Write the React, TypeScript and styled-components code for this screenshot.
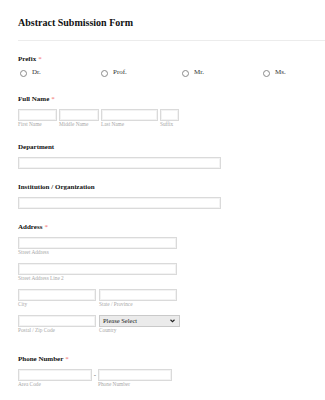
import styled, {createGlobalStyle} from "styled-components";

const GlobalStyle = createGlobalStyle`
  html, body {
    margin: 0;
    padding: 0;
    background: #fff;
  }
  body {
    font-family: "Liberation Serif", "Times New Roman", serif;
    color: #1a1a1a;
  }
`;

const Page = styled.div`
  width: 325px;
  padding-left: 18px;
  box-sizing: border-box;
  overflow: hidden;
`;

const Header = styled.div`
  padding-top: 17px;
  border-bottom: 1px solid #ececec;
  padding-bottom: 11px;
`;

const Title = styled.h1`
  margin: 0;
  font-size: 10px;
  line-height: 12px;
  font-weight: bold;
  color: #111;
`;

const Field = styled.div<{ $top: number }>`
  margin-top: ${p => p.$top}px;
`;

const Label = styled.div`
  font-size: 7px;
  line-height: 9px;
  font-weight: bold;
  color: #111;
  margin-bottom: 5px;

  span {
    color: #f26d6d;
    font-weight: normal;
    margin-left: 2px;
  }
`;

const RadioRow = styled.div`
  display: flex;
  margin-top: -2px;
`;

const RadioOption = styled.label`
  width: 81px;
  flex-shrink: 0;
  display: flex;
  align-items: center;
  font-size: 7px;
  line-height: 9px;
  font-weight: normal;
  color: #333;

  &:last-child {
    width: auto;
  }
`;

const Circle = styled.span`
  width: 7px;
  height: 7px;
  box-sizing: border-box;
  border: 1px solid #8a8a8a;
  border-radius: 50%;
  margin: 3px 5px 0 2px;
`;

const Row = styled.div<{ $gap?: number }>`
  display: flex;
  gap: ${p => p.$gap ?? 3}px;
  align-items: flex-start;
`;

const Part = styled.div<{ $w: number }>`
  width: ${p => p.$w}px;
  flex-shrink: 0;
  display: flex;
  flex-direction: column;
`;

const Input = styled.div<{ $w?: number }>`
  width: ${p => (p.$w ? `${p.$w}px` : "100%")};
  height: 12px;
  box-sizing: border-box;
  border: 1px solid #dadada;
  box-shadow: inset 0 0 0 1px #f3f3f3;
  background: #fff;
`;

const Sub = styled.div`
  font-size: 5.3px;
  line-height: 7px;
  color: #a8a8a8;
  white-space: nowrap;
`;

const Stack = styled.div<{ $gap: number }>`
  display: flex;
  flex-direction: column;
  gap: ${p => p.$gap}px;
`;

const SelectBox = styled.div`
  position: relative;
  width: 81px;
  height: 12px;
  box-sizing: border-box;
  border: 1px solid #c9c9c9;
  background: #ebebeb;
  font-size: 6.5px;
  line-height: 10px;
  padding-left: 3px;
  color: #222;

  svg {
    position: absolute;
    right: 4px;
    top: 3px;
  }
`;

const Dash = styled.div`
  width: 6px;
  font-size: 7px;
  line-height: 12px;
  text-align: center;
  color: #555;
`;

function Req({children}: { children: string }) {
    return <Label>{children}<span>*</span></Label>
}

export default function App() {
    const prefixes = ["Dr.", "Prof.", "Mr.", "Ms."];

    return (
        <Page>
            <GlobalStyle/>
            <Header>
                <Title>Abstract Submission Form</Title>
            </Header>

            <Field $top={14}>
                <Req>Prefix</Req>
                <RadioRow>
                    {prefixes.map(p => (
                        <RadioOption key={p}><Circle/>{p}</RadioOption>
                    ))}
                </RadioRow>
            </Field>

            <Field $top={18}>
                <Req>Full Name</Req>
                <Row $gap={2}>
                    <Part $w={39}><Input/><Sub>First Name</Sub></Part>
                    <Part $w={40}><Input/><Sub>Middle Name</Sub></Part>
                    <Part $w={57}><Input/><Sub>Last Name</Sub></Part>
                    <Part $w={19}><Input/><Sub>Suffix</Sub></Part>
                </Row>
            </Field>

            <Field $top={15}>
                <Label>Department</Label>
                <Input $w={203}/>
            </Field>

            <Field $top={14}>
                <Label>Institution / Organization</Label>
                <Input $w={203}/>
            </Field>

            <Field $top={14}>
                <Req>Address</Req>
                <Stack $gap={7}>
                    <Part $w={159}><Input/><Sub>Street Address</Sub></Part>
                    <Part $w={159}><Input/><Sub>Street Address Line 2</Sub></Part>
                    <Row $gap={3}>
                        <Part $w={78}><Input/><Sub>City</Sub></Part>
                        <Part $w={78}><Input/><Sub>State / Province</Sub></Part>
                    </Row>
                    <Row $gap={3}>
                        <Part $w={78}><Input/><Sub>Postal / Zip Code</Sub></Part>
                        <Part $w={81}>
                            <SelectBox>
                                Please Select
                                <svg width="5" height="4" viewBox="0 0 10 8">
                                    <path d="M1 1.5 L5 5.5 L9 1.5" fill="none" stroke="#222" strokeWidth="2.2"/>
                                </svg>
                            </SelectBox>
                            <Sub>Country</Sub>
                        </Part>
                    </Row>
                </Stack>
            </Field>

            <Field $top={21}>
                <Req>Phone Number</Req>
                <Row $gap={0}>
                    <Part $w={74}><Input/><Sub>Area Code</Sub></Part>
                    <Dash>-</Dash>
                    <Part $w={74}><Input/><Sub>Phone Number</Sub></Part>
                </Row>
            </Field>
        </Page>
    )
}
